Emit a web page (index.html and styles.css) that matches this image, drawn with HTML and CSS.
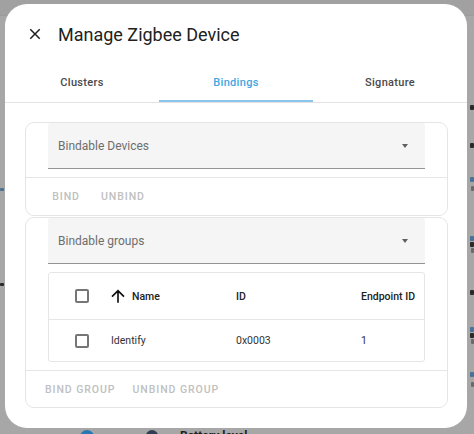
FILE: index.html
```html
<!DOCTYPE html>
<html>
<head>
<meta charset="utf-8">
<link rel="stylesheet" href="styles.css">
</head>
<body>
<div class="page">
  <div class="page-top"></div>
  <div class="page-main">
    <div class="page-left">
      <span class="frag blue l1"></span>
      <span class="frag dark l2"></span>
    </div>
    <div class="page-right">
      <span class="frag dark r1"></span>
      <span class="frag dark r2"></span>
      <span class="frag blue r3"></span>
      <span class="frag gray r4"></span>
      <span class="frag blue r5"></span>
      <span class="frag dark r6"></span>
      <span class="frag gray r7"></span>
      <span class="frag dark r8"></span>
      <span class="frag blue r9"></span>
      <span class="frag dark r10"></span>
      <span class="frag gray r11"></span>
      <span class="frag blue r12"></span>
      <span class="frag gray r13"></span>
    </div>
  </div>
  <div class="page-bottom">
    <span class="dot dot-blue"></span>
    <span class="dot dot-navy"></span>
    <span class="bottom-text">Battery level</span>
  </div>
</div>

<div class="dialog">
  <div class="header">
    <svg class="close" viewBox="0 0 24 24" width="18" height="18"><path d="M19,6.41L17.59,5L12,10.59L6.41,5L5,6.41L10.59,12L5,17.59L6.41,19L12,13.41L17.59,19L19,17.59L13.41,12L19,6.41Z"/></svg>
    <div class="title">Manage Zigbee Device</div>
  </div>
  <div class="tabs">
    <div class="tab">Clusters</div>
    <div class="tab active">Bindings</div>
    <div class="tab">Signature</div>
  </div>
  <div class="content">
    <div class="card">
      <div class="select">
        <span class="select-label">Bindable Devices</span>
        <span class="arrow"></span>
      </div>
      <div class="card-divider"></div>
      <div class="actions actions-devices">
        <span class="btn">BIND</span>
        <span class="btn">UNBIND</span>
      </div>
    </div>
    <div class="card">
      <div class="select">
        <span class="select-label">Bindable groups</span>
        <span class="arrow"></span>
      </div>
      <div class="table">
        <div class="trow thead">
          <div class="cell cb-cell"><span class="checkbox"></span></div>
          <div class="cell name-head">
            <svg class="sort" viewBox="0 0 24 24" width="20" height="20"><path d="M13,20H11V8L5.5,13.5L4.08,12.08L12,4.16L19.92,12.08L18.5,13.5L13,8V20Z"/></svg>
            <span>Name</span>
          </div>
          <div class="cell">ID</div>
          <div class="cell">Endpoint ID</div>
        </div>
        <div class="trow tbody">
          <div class="cell cb-cell"><span class="checkbox"></span></div>
          <div class="cell">Identify</div>
          <div class="cell">0x0003</div>
          <div class="cell">1</div>
        </div>
      </div>
      <div class="card-divider"></div>
      <div class="actions actions-groups">
        <span class="btn">BIND GROUP</span>
        <span class="btn">UNBIND GROUP</span>
      </div>
    </div>
  </div>
</div>
</body>
</html>
```

FILE: styles.css
```css
html, body {
  margin: 0;
  padding: 0;
}
body {
  width: 474px;
  height: 434px;
  overflow: hidden;
  background: #a7a7a7;
  font-family: Roboto, "Liberation Sans", sans-serif;
  position: relative;
}
.page {
  width: 474px;
  height: 434px;
  display: flex;
  flex-direction: column;
}
.page-top {
  height: 15px;
  background: #a1a1a1;
  border-bottom: 1px solid #9c9c9c;
  flex: none;
}
.page-main {
  flex: 1;
  display: flex;
  justify-content: space-between;
}
.page-left {
  width: 6px;
  display: flex;
  flex-direction: column;
}
.page-right {
  width: 7px;
  display: flex;
  flex-direction: column;
  align-items: flex-end;
}
.frag {
  display: block;
  width: 4px;
  height: 5px;
  border-radius: 1px;
  flex: none;
}
.frag.blue { background: #4a7196; }
.frag.dark { background: #2a2a2a; }
.frag.gray { background: #6a6a6a; width: 3px; }
.page-left .frag { width: 4px; height: 3px; }
.l1 { margin-top: 172px; }
.l2 { margin-top: 92px; }
.r1 { margin-top: 89px; }
.r2 { margin-top: 33px; }
.r3 { margin-top: 29px; }
.r4 { margin-top: 4px; }
.r5 { margin-top: 45px; }
.r6 { margin-top: 1px; }
.r7 { margin-top: 1px; }
.r8 { margin-top: 37px; }
.r9 { margin-top: 32px; }
.r10 { margin-top: 1px; }
.r11 { margin-top: 1px; }
.r12 { margin-top: 28px; }
.r13 { margin-top: 5px; }
.page-bottom {
  height: 6px;
  flex: none;
  display: flex;
  align-items: flex-start;
  padding-left: 80px;
  overflow: hidden;
}
.dot {
  width: 14px;
  height: 14px;
  border-radius: 50%;
  margin-top: 2px;
}
.dot-blue { background: #2a78b0; }
.dot-navy { background: #2f3e52; margin-left: 52px; width: 12px; height: 12px; }
.bottom-text {
  margin-left: 22px;
  font-size: 12px;
  font-weight: 700;
  color: #1e1e1e;
  line-height: 12px;
  margin-top: 2px;
}

/* dialog overlay */
.dialog {
  position: absolute;
  left: 5px;
  top: 4px;
  width: 462px;
  height: 424px;
  background: #ffffff;
  border-radius: 22px;
  overflow: hidden;
  display: flex;
  flex-direction: column;
}
.header {
  height: 60px;
  flex: none;
  display: flex;
  align-items: center;
  padding-left: 21px;
  gap: 14px;
}
.close {
  fill: #1f1f1f;
  flex: none;
}
.title {
  font-size: 18px;
  color: #212121;
  font-weight: 400;
}
.tabs {
  flex: none;
  display: grid;
  grid-template-columns: 1fr 1fr 1fr;
  border-bottom: 1px solid #e3e3e3;
}
.tab {
  height: 35px;
  padding-top: 1px;
  box-sizing: content-box;
  border-bottom: 2px solid transparent;
  display: flex;
  align-items: center;
  justify-content: center;
  font-size: 11px;
  font-weight: 500;
  letter-spacing: 0.3px;
  color: #4a4a4a;
}
.tab.active {
  color: #3fa6e2;
  border-bottom-color: #8ac6eb;
}
.content {
  flex: 1;
  padding: 19px 19px 20px 20px;
  display: flex;
  flex-direction: column;
  gap: 1px;
}
.card {
  border: 1px solid #e5e5e5;
  border-radius: 9px;
}
.select {
  margin: 0 22px;
  height: 45px;
  background: #f5f5f5;
  border-bottom: 1px solid #949494;
  border-radius: 3px 3px 0 0;
  display: flex;
  align-items: center;
  justify-content: space-between;
  padding: 0 17px 0 10px;
}
.select-label {
  font-size: 12px;
  color: #6e6e6e;
}
.arrow {
  width: 0;
  height: 0;
  border-left: 3.5px solid transparent;
  border-right: 3.5px solid transparent;
  border-top: 4px solid #5f5f5f;
}
.card-divider {
  margin-top: 8px;
  border-top: 1px solid #e6e6e6;
}
.actions {
  height: 37px;
  display: flex;
  align-items: center;
  gap: 5px;
}
.actions-devices { padding-left: 16px; }
.actions-groups { padding-left: 13px; height: 36px; }
.btn {
  min-width: 48px;
  padding: 0 6px;
  box-sizing: border-box;
  text-align: center;
  font-size: 10.5px;
  font-weight: 500;
  letter-spacing: 0.94px;
  color: #c0c0c0;
}
.table {
  margin: 8px 22px 0;
  border: 1px solid #e6e6e6;
  border-radius: 3px;
}
.trow {
  display: grid;
  grid-template-columns: 62px 125px 125px 1fr;
  align-items: center;
}
.thead {
  height: 46px;
  border-bottom: 1px solid #e6e6e6;
  font-size: 10.5px;
  font-weight: 500;
  color: #222222;
}
.tbody {
  height: 41px;
  font-size: 10.5px;
  color: #333333;
}
.cell {
  display: flex;
  align-items: center;
  white-space: nowrap;
}
.cb-cell {
  padding-left: 26px;
}
.checkbox {
  width: 14px;
  height: 14px;
  box-sizing: border-box;
  border: 2px solid #767676;
  border-radius: 2px;
}
.name-head .sort {
  fill: #111111;
  margin-left: -3px;
  margin-right: 4px;
  flex: none;
}
```
